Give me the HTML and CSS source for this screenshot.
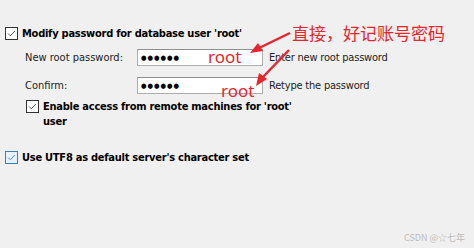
FILE: index.html
```html
<!DOCTYPE html>
<html lang="en">
<head>
    <meta charset="UTF-8">
    <title>Root Account</title>
    <link rel="stylesheet" href="styles.css">
</head>
<body>
    <div class="panel">
        <label class="check-row top-check">
            <span class="box"><svg viewBox="0 0 13 13"><path d="M2.5 6.5 L5.2 9.2 L10.5 3.5" /></svg></span>
            <span class="bold">Modify password for database user 'root'</span>
        </label>

        <div class="fields">
            <span class="label">New root password:</span>
            <div class="input"><span class="dots">&#9679;&#9679;&#9679;&#9679;&#9679;&#9679;</span><span class="mark mark-one">root</span></div>
            <span class="hint">Enter new root password</span>

            <span class="label">Confirm:</span>
            <div class="input"><span class="dots">&#9679;&#9679;&#9679;&#9679;&#9679;&#9679;</span><span class="mark mark-two">root</span></div>
            <span class="hint">Retype the password</span>
        </div>

        <label class="check-row remote-check">
            <span class="box"><svg viewBox="0 0 13 13"><path d="M2.5 6.5 L5.2 9.2 L10.5 3.5" /></svg></span>
            <span class="bold">Enable access from remote machines for 'root'<br>user</span>
        </label>

        <label class="check-row utf-check">
            <span class="box box-hover"><svg viewBox="0 0 13 13"><path d="M2.5 6.5 L5.2 9.2 L10.5 3.5" /></svg></span>
            <span class="bold">Use UTF8 as default server's character set</span>
        </label>
    </div>

    <div class="note">直接，好记账号密码</div>
    <svg class="arrows" viewBox="0 0 474 248" width="474" height="248">
        <path d="M290 33 L257 49" />
        <path d="M250 53 L258 43 L263 51 Z" class="head" />
        <path d="M289 50 L262 78" />
        <path d="M256 86 L259 73 L267 79 Z" class="head" />
    </svg>
    <div class="watermark">CSDN @☆七年</div>
</body>
</html>
```

FILE: styles.css
```css
body {
    margin: 0;
    width: 474px;
    height: 248px;
    overflow: hidden;
    background-color: #f0f0f0;
    font-family: 'DejaVu Sans Condensed', 'DejaVu Sans', sans-serif;
    font-size: 11px;
    color: #000;
}
.panel {
    padding: 26px 0 0 5px;
}
.check-row {
    display: flex;
    align-items: flex-start;
    gap: 4px;
}
.box {
    flex: none;
    width: 11px;
    height: 11px;
    border: 1px solid #333;
    background-color: #fff;
    margin-top: 1px;
}
.box svg {
    display: block;
    width: 11px;
    height: 11px;
}
.box path {
    fill: none;
    stroke: #333;
    stroke-width: 1;
}
.box-hover {
    border-color: #3c7fb1;
    background-color: #e5f1fb;
}
.box-hover path {
    stroke: #3c7fb1;
}
.bold {
    font-weight: bold;
    letter-spacing: -0.25px;
    line-height: 15px;
}
.fields {
    display: grid;
    grid-template-columns: 112px 126px auto;
    align-items: center;
    row-gap: 11px;
    margin: 8px 0 0 20px;
}
.label {
    color: #222;
}
.hint {
    padding-left: 6px;
    letter-spacing: -0.2px;
    color: #222;
}
.input {
    position: relative;
    height: 15px;
    border: 1px solid #adadad;
    border-top-color: #8f8f8f;
    background-color: #fff;
    display: flex;
    align-items: center;
}
.dots {
    font-size: 7px;
    letter-spacing: 1px;
    padding-left: 3px;
}
.mark {
    position: absolute;
    color: #e4262f;
    font-family: 'Noto Sans', sans-serif;
    font-size: 17px;
    line-height: 1;
}
.mark-one {
    left: 70px;
    top: -2px;
}
.mark-two {
    left: 83px;
    top: 4px;
}
.remote-check {
    margin: 5px 0 0 21px;
}
.utf-check {
    margin-top: 21px;
}
.note {
    position: absolute;
    left: 292px;
    top: 21px;
    color: #e4262f;
    font-family: 'Noto Sans CJK SC', sans-serif;
    font-size: 17px;
    line-height: 24px;
}
.arrows {
    position: absolute;
    left: 0;
    top: 0;
    pointer-events: none;
}
.arrows path {
    fill: none;
    stroke: #e4262f;
    stroke-width: 2.5;
}
.arrows .head {
    fill: #e4262f;
    stroke: none;
}
.watermark {
    position: absolute;
    left: 404px;
    top: 231px;
    color: #bcbcbc;
    font-family: 'Noto Sans CJK SC', sans-serif;
    font-size: 9px;
}
```
